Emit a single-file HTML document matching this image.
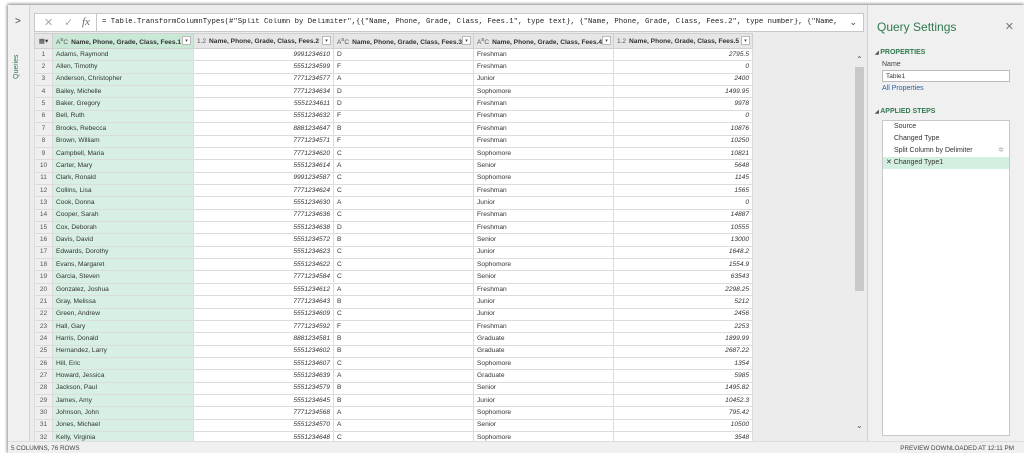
<!DOCTYPE html>
<html><head><meta charset="utf-8"><style>
*{box-sizing:border-box;margin:0;padding:0}
body{width:1024px;height:453px;overflow:hidden;background:#fff;font-family:"Liberation Sans",sans-serif;position:relative}
#win{position:absolute;left:8px;top:5px;width:1016px;height:448px;background:#ececec;box-shadow:0 -1px 3px #999,-1px 0 3px #aaa}
#left{position:absolute;left:0;top:0;width:22px;height:436px;background:#f0f0f0;border-right:1px solid #d4d4d4}
#left .arr{position:absolute;left:7px;top:11px;font-size:10px;color:#444}
#left .q{position:absolute;transform:rotate(-90deg);transform-origin:left top;font-size:7px;color:#2f7a4f;white-space:nowrap;top:58px;left:5px}
#fbar{position:absolute;left:26px;top:8px;width:830px;height:19px;background:#fff;border:1px solid #c8c8c8}
#fbar .btns{position:absolute;left:0;top:0;width:62px;height:17px;border-right:1px solid #c8c8c8;font-size:11px;color:#aaa}
#fbar .btns span{position:absolute;top:2px}
#fbar .f{position:absolute;left:67px;top:4px;font-family:"Liberation Mono",monospace;font-size:7.3px;color:#222;white-space:nowrap;width:740px;overflow:hidden}
#fbar .dd{position:absolute;right:6px;top:3px;font-size:9px;color:#444}
#grid{position:absolute;left:26px;top:28px;border-collapse:collapse;table-layout:fixed;font-size:6.6px;color:#333}
#grid tr{height:12.36px}
#grid td,#grid th{border:1px solid #dcdcdc;padding:0 3px;white-space:nowrap;overflow:hidden;line-height:10px}
#grid tr.hd{height:13px}
#grid th{background:#e6e6e6;font-weight:bold;text-align:left;color:#333;border-color:#cfcfcf;position:relative;line-height:11px}
#grid th.g{background:#c9e8d6}
#grid td.n{background:#efefef;text-align:center;color:#555}
#grid td.c1{background:#d7f0e3}
#grid td.r{text-align:right;font-style:italic}
#grid td{background:#fff}
.ty{font-weight:normal;color:#555;font-size:6.5px;margin-right:3px}
.ty sup{font-size:4.5px;vertical-align:3px}
.dr{position:absolute;right:2px;top:2px;width:9px;height:9px;border:1px solid #bbb;background:#fff;font-size:5px;text-align:center;line-height:8px;color:#444;font-weight:normal}
#sb{position:absolute;left:846px;top:48px;width:12px;height:381px;background:#ececec}
#sb .th{position:absolute;left:1px;top:14px;width:9px;height:224px;background:#c8c8c8}
#sb .u,#sb .d{position:absolute;left:2px;font-size:8px;color:#555}
#panel{position:absolute;left:859px;top:0;width:157px;height:436px;background:#f0f0f0;border-left:1px solid #d0d0d0}
#panel .t{position:absolute;left:9px;top:15px;font-size:12px;color:#2f7a4f}
#panel .x{position:absolute;right:10px;top:15px;font-size:11px;color:#777}
.h{position:absolute;left:7px;font-size:7px;font-weight:bold;color:#2f7a4f}
.h:before{content:"◢ ";font-size:5px;color:#555}
.lbl{position:absolute;left:14px;font-size:7px;color:#444}
#nm{position:absolute;left:14px;top:65px;width:128px;height:12px;background:#fff;border:1px solid #bbb;font-size:6.5px;padding:2px 3px;color:#333}
#steps{position:absolute;left:14px;top:115px;width:128px;height:316px;background:#fff;border:1px solid #c8c8c8;font-size:7px;color:#333}
#steps div{height:12px;line-height:12px;padding-left:11px}
#steps .sel{background:#d3efe0;padding-left:3px}
#status{position:absolute;left:0;top:436px;width:1016px;height:12px;background:#f0f0f0;font-size:6.3px;color:#444;border-top:1px solid #ddd}
</style></head><body>
<div id="win">
<div id="left"><div class="arr">&gt;</div><div class="q" style="transform:rotate(-90deg) translateX(-16px)">Queries</div></div>
<div id="fbar"><div class="btns"><span style="left:9px">✕</span><span style="left:29px">✓</span><span style="left:47px;font-style:italic;font-family:'Liberation Serif',serif;color:#666">fx</span></div>
<div class="f">= Table.TransformColumnTypes(#"Split Column by Delimiter",{{"Name, Phone, Grade, Class, Fees.1", type text}, {"Name, Phone, Grade, Class, Fees.2", type number}, {"Name, Phone, Grade, Class,</div><div class="dd">⌄</div></div>
<table id="grid">
<colgroup><col style="width:18px"><col style="width:141px"><col style="width:140px"><col style="width:140px"><col style="width:140px"><col style="width:139px"></colgroup>
<tr class="hd"><th style="text-align:center;font-weight:normal;padding:0">▦▾</th><th class="g"><span class="ty">A<sup>B</sup>C</span>Name, Phone, Grade, Class, Fees.1<span class="dr">▾</span></th><th><span class="ty">1.2</span>Name, Phone, Grade, Class, Fees.2<span class="dr">▾</span></th><th><span class="ty">A<sup>B</sup>C</span>Name, Phone, Grade, Class, Fees.3<span class="dr">▾</span></th><th><span class="ty">A<sup>B</sup>C</span>Name, Phone, Grade, Class, Fees.4<span class="dr">▾</span></th><th><span class="ty">1.2</span>Name, Phone, Grade, Class, Fees.5<span class="dr">▾</span></th></tr>
<tr><td class="n">1</td><td class="c1">Adams, Raymond</td><td class="r">9991234610</td><td>D</td><td>Freshman</td><td class="r">2795.5</td></tr>
<tr><td class="n">2</td><td class="c1">Allen, Timothy</td><td class="r">5551234599</td><td>F</td><td>Freshman</td><td class="r">0</td></tr>
<tr><td class="n">3</td><td class="c1">Anderson, Christopher</td><td class="r">7771234577</td><td>A</td><td>Junior</td><td class="r">2400</td></tr>
<tr><td class="n">4</td><td class="c1">Bailey, Michelle</td><td class="r">7771234634</td><td>D</td><td>Sophomore</td><td class="r">1499.95</td></tr>
<tr><td class="n">5</td><td class="c1">Baker, Gregory</td><td class="r">5551234611</td><td>D</td><td>Freshman</td><td class="r">9978</td></tr>
<tr><td class="n">6</td><td class="c1">Bell, Ruth</td><td class="r">5551234632</td><td>F</td><td>Freshman</td><td class="r">0</td></tr>
<tr><td class="n">7</td><td class="c1">Brooks, Rebecca</td><td class="r">8881234647</td><td>B</td><td>Freshman</td><td class="r">10876</td></tr>
<tr><td class="n">8</td><td class="c1">Brown, William</td><td class="r">7771234571</td><td>F</td><td>Freshman</td><td class="r">10250</td></tr>
<tr><td class="n">9</td><td class="c1">Campbell, Maria</td><td class="r">7771234620</td><td>C</td><td>Sophomore</td><td class="r">10821</td></tr>
<tr><td class="n">10</td><td class="c1">Carter, Mary</td><td class="r">5551234614</td><td>A</td><td>Senior</td><td class="r">5648</td></tr>
<tr><td class="n">11</td><td class="c1">Clark, Ronald</td><td class="r">9991234587</td><td>C</td><td>Sophomore</td><td class="r">1145</td></tr>
<tr><td class="n">12</td><td class="c1">Collins, Lisa</td><td class="r">7771234624</td><td>C</td><td>Freshman</td><td class="r">1565</td></tr>
<tr><td class="n">13</td><td class="c1">Cook, Donna</td><td class="r">5551234630</td><td>A</td><td>Junior</td><td class="r">0</td></tr>
<tr><td class="n">14</td><td class="c1">Cooper, Sarah</td><td class="r">7771234636</td><td>C</td><td>Freshman</td><td class="r">14887</td></tr>
<tr><td class="n">15</td><td class="c1">Cox, Deborah</td><td class="r">5551234638</td><td>D</td><td>Freshman</td><td class="r">10555</td></tr>
<tr><td class="n">16</td><td class="c1">Davis, David</td><td class="r">5551234572</td><td>B</td><td>Senior</td><td class="r">13000</td></tr>
<tr><td class="n">17</td><td class="c1">Edwards, Dorothy</td><td class="r">5551234623</td><td>C</td><td>Junior</td><td class="r">1648.2</td></tr>
<tr><td class="n">18</td><td class="c1">Evans, Margaret</td><td class="r">5551234622</td><td>C</td><td>Sophomore</td><td class="r">1554.9</td></tr>
<tr><td class="n">19</td><td class="c1">Garcia, Steven</td><td class="r">7771234584</td><td>C</td><td>Senior</td><td class="r">63543</td></tr>
<tr><td class="n">20</td><td class="c1">Gonzalez, Joshua</td><td class="r">5551234612</td><td>A</td><td>Freshman</td><td class="r">2298.25</td></tr>
<tr><td class="n">21</td><td class="c1">Gray, Melissa</td><td class="r">7771234643</td><td>B</td><td>Junior</td><td class="r">5212</td></tr>
<tr><td class="n">22</td><td class="c1">Green, Andrew</td><td class="r">5551234609</td><td>C</td><td>Junior</td><td class="r">2456</td></tr>
<tr><td class="n">23</td><td class="c1">Hall, Gary</td><td class="r">7771234592</td><td>F</td><td>Freshman</td><td class="r">2253</td></tr>
<tr><td class="n">24</td><td class="c1">Harris, Donald</td><td class="r">8881234581</td><td>B</td><td>Graduate</td><td class="r">1899.99</td></tr>
<tr><td class="n">25</td><td class="c1">Hernandez, Larry</td><td class="r">5551234602</td><td>B</td><td>Graduate</td><td class="r">2687.22</td></tr>
<tr><td class="n">26</td><td class="c1">Hill, Eric</td><td class="r">5551234607</td><td>C</td><td>Sophomore</td><td class="r">1354</td></tr>
<tr><td class="n">27</td><td class="c1">Howard, Jessica</td><td class="r">5551234639</td><td>A</td><td>Graduate</td><td class="r">5985</td></tr>
<tr><td class="n">28</td><td class="c1">Jackson, Paul</td><td class="r">5551234579</td><td>B</td><td>Senior</td><td class="r">1495.82</td></tr>
<tr><td class="n">29</td><td class="c1">James, Amy</td><td class="r">5551234645</td><td>B</td><td>Junior</td><td class="r">10452.3</td></tr>
<tr><td class="n">30</td><td class="c1">Johnson, John</td><td class="r">7771234568</td><td>A</td><td>Sophomore</td><td class="r">795.42</td></tr>
<tr><td class="n">31</td><td class="c1">Jones, Michael</td><td class="r">5551234570</td><td>A</td><td>Senior</td><td class="r">10500</td></tr>
<tr><td class="n">32</td><td class="c1">Kelly, Virginia</td><td class="r">5551234648</td><td>C</td><td>Sophomore</td><td class="r">3548</td></tr>
</table>
<div id="sb"><div class="u" style="top:2px">⌃</div><div class="th"></div><div class="d" style="top:368px">⌄</div></div>
<div id="panel"><div class="t">Query Settings</div><div class="x">✕</div>
<div class="h" style="top:44px">PROPERTIES</div>
<div class="lbl" style="top:56px">Name</div>
<div id="nm">Table1</div>
<div class="lbl" style="top:80px;color:#2a5d9f">All Properties</div>
<div class="h" style="top:103px">APPLIED STEPS</div>
<div id="steps"><div>Source</div><div>Changed Type</div><div>Split Column by Delimiter<span style="float:right;margin-right:5px;color:#aaa">✲</span></div><div class="sel">✕ Changed Type1</div></div>
</div>
<div id="status"><span style="position:absolute;left:3px;top:3px">5 COLUMNS, 76 ROWS</span><span style="position:absolute;right:10px;top:3px">PREVIEW DOWNLOADED AT 12:11 PM</span></div>
</div>
</body></html>
